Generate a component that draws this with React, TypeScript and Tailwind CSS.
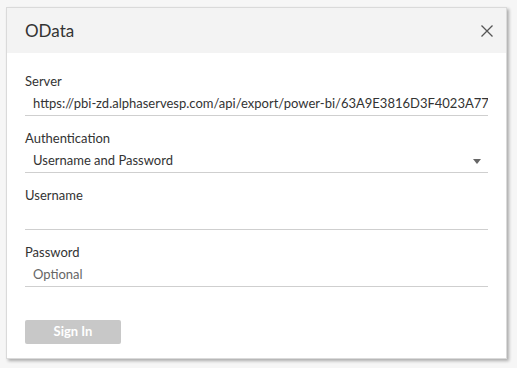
import React from "react";

function Field({ label, value, placeholder, select }: { label: string; value?: string; placeholder?: string; select?: boolean }) {
  return (
    <div className="flex flex-col">
      <div className="h-[16px] text-[13px] leading-[16px] text-[#333333]">{label}</div>
      <div className="h-[27px] border-b border-[#cfcfcf] flex items-center pt-[3px] pl-[8px] pr-[8px] relative overflow-hidden">
        {value ? (
          <span className="text-[13px] text-[#333333] whitespace-nowrap">{value}</span>
        ) : placeholder ? (
          <span className="text-[13px] text-[#666666] whitespace-nowrap">{placeholder}</span>
        ) : null}
        {select && (
          <svg className="absolute right-[7px] top-[13px]" width="8" height="5" viewBox="0 0 8 5">
            <path d="M0 0 L8 0 L4 5 Z" fill="#666666" />
          </svg>
        )}
      </div>
    </div>
  );
}

export default function App() {
  return (
    <div className="w-[517px] h-[368px] bg-[#f6f6f6] pt-[7px] pl-[6px]" style={{ fontFamily: "Lato, 'Open Sans', sans-serif" }}>
      <div className="w-[501px] h-[352px] bg-white border border-[#dadada] shadow-[2px_2px_3px_rgba(0,0,0,0.3)] flex flex-col">
        <div className="h-[45px] bg-[#f3f3f3] flex items-center justify-between pl-[18px] pr-[12px]">
          <span className="text-[17px] text-[#333333]">OData</span>
          <svg width="14" height="14" viewBox="0 0 14 14">
            <path d="M1.5 1.5 L12.5 12.5 M12.5 1.5 L1.5 12.5" stroke="#555555" strokeWidth="1.3" />
          </svg>
        </div>
        <div className="flex flex-col pl-[18px] pr-[18px] pt-[20px] gap-[14px]">
          <Field label="Server" value="https://pbi-zd.alphaservesp.com/api/export/power-bi/63A9E3816D3F4023A77" />
          <Field label="Authentication" value="Username and Password" select />
          <Field label="Username" />
          <Field label="Password" placeholder="Optional" />
        </div>
        <div className="pl-[18px] pt-[31px]">
          <button className="w-[96px] h-[24px] bg-[#c8c8c8] rounded-[2px] text-white text-[13px] font-bold">Sign In</button>
        </div>
      </div>
    </div>
  );
}
